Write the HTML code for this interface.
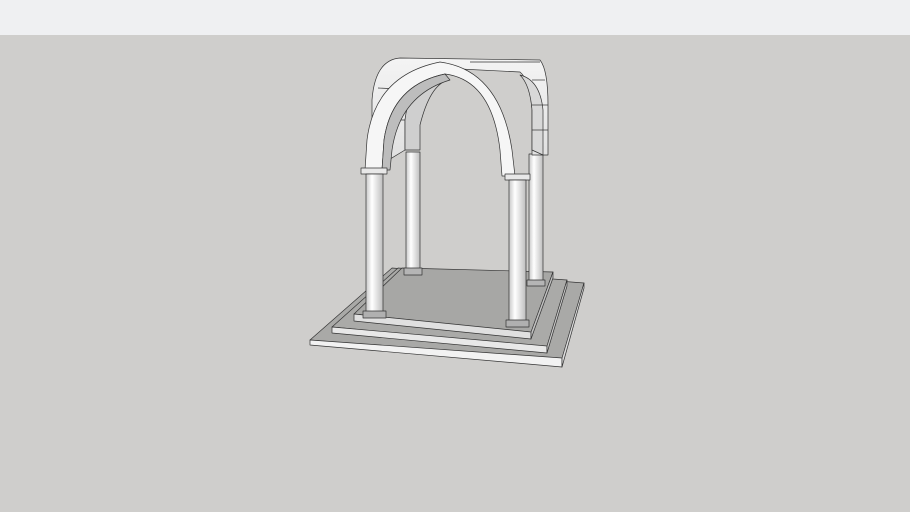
<!DOCTYPE html>
<html><head><style>
html,body{margin:0;padding:0;width:910px;height:512px;overflow:hidden;background:#cfcecc}
.bar{position:absolute;left:0;top:0;width:910px;height:35px;background:#eff0f2}
svg{position:absolute;left:0;top:0}
</style></head><body>
<div class="bar"></div>
<svg width="910" height="512" viewBox="0 0 910 512">
<defs>
<linearGradient id="col" x1="0" x2="1"><stop offset="0" stop-color="#c8c8c8"/><stop offset=".35" stop-color="#fff"/><stop offset="1" stop-color="#bdbdbd"/></linearGradient>
<linearGradient id="vault" x1="0" y1="0" x2="0" y2="1"><stop offset="0" stop-color="#f4f4f4"/><stop offset="1" stop-color="#dedede"/></linearGradient>
</defs>
<g stroke="#333" stroke-width="0.7" stroke-linejoin="round">
<!-- bottom slab -->
<polygon points="310,340 392,268 584,283 562,362" fill="#a9a9a7"/>
<polygon points="310,340 562,358 562,367 310,345" fill="#f2f2f2"/>
<polygon points="562,358 584,283 584,288 562,367" fill="#dcdcdc"/>
<!-- middle step -->
<polygon points="332,327 398,268 567,280 547,348" fill="#aaaaa8"/>
<polygon points="332,327 547,346 547,353 332,333" fill="#e8e8e8"/>
<polygon points="547,346 567,280 567,286 547,353" fill="#c8c8c8"/>
<!-- top platform -->
<polygon points="354,314 402,268 553,272 531,333" fill="#a7a7a5"/>
<polygon points="354,314 531,332 531,339 354,321" fill="#e0e0e0"/>
<polygon points="531,332 553,272 553,278 531,339" fill="#c0c0c0"/>
<!-- back columns -->
<rect x="406" y="152" width="14" height="118" fill="url(#col)"/>
<rect x="404" y="268" width="18" height="7" fill="#b5b5b5"/>
<rect x="529" y="154" width="14" height="128" fill="url(#col)"/>
<rect x="527" y="280" width="18" height="6" fill="#b5b5b5"/>
<!-- vault -->
<path d="M372,165 L372,100 Q375,60 400,58 L540,60 Q548,70 548,105 L548,155 L532,155 L532,110 Q530,80 520,72 L440,68 Q412,75 405,120 L405,150 L372,170 Z" fill="url(#vault)"/>
<path d="M405,150 L420,150 L420,125 Q430,85 448,80 L430,80 Q408,90 405,120 Z" fill="#cfcfcf"/>
<path d="M532,150 L532,110 Q530,85 520,75 Q540,80 543,110 L543,155 Z" fill="#d8d8d8"/>
<line x1="372" y1="120" x2="405" y2="120"/><line x1="378" y1="88" x2="420" y2="90"/>
<line x1="532" y1="80" x2="545" y2="80"/><line x1="532" y1="105" x2="548" y2="105"/><line x1="532" y1="130" x2="548" y2="130"/>
<line x1="470" y1="62" x2="540" y2="62"/>
<!-- front arch -->
<path d="M365,170 L367,140 Q375,75 440,62 Q500,70 512,150 L515,176 L502,176 L500,150 Q492,80 445,74 Q392,85 384,140 L382,170 Z" fill="#f6f6f6"/>
<path d="M384,140 Q392,85 445,74 L450,80 Q400,95 392,150 L390,170 L382,170 Z" fill="#bdbdbd"/>
<!-- front columns -->
<rect x="361" y="168" width="26" height="6" fill="#e8e8e8"/>
<rect x="366" y="174" width="17" height="140" fill="url(#col)"/>
<rect x="363" y="311" width="23" height="7" fill="#b0b0b0"/>
<rect x="505" y="174" width="25" height="6" fill="#e8e8e8"/>
<rect x="509" y="180" width="17" height="143" fill="url(#col)"/>
<rect x="506" y="320" width="23" height="7" fill="#b0b0b0"/>
</g>
</svg>
</body></html>
